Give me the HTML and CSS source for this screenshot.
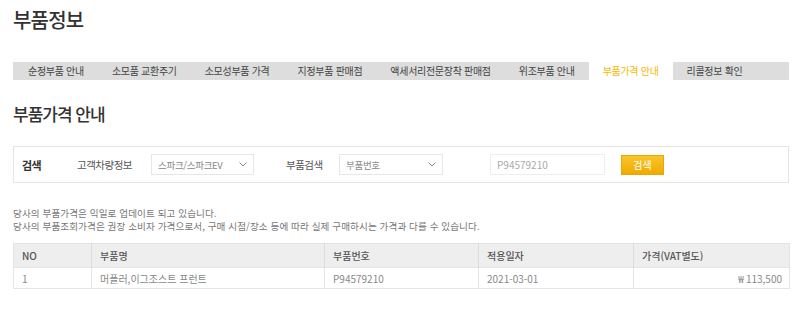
FILE: index.html
```html
<!DOCTYPE html>
<html lang="ko">
<head>
<meta charset="utf-8">
<link rel="stylesheet" href="styles.css">
</head>
<body>
<div class="page">
  <h1 class="title">부품정보</h1>
  <nav class="tabs">
    <a class="tab">순정부품 안내</a>
    <a class="tab">소모품 교환주기</a>
    <a class="tab">소모성부품 가격</a>
    <a class="tab">지정부품 판매점</a>
    <a class="tab">액세서리전문장착 판매점</a>
    <a class="tab">위조부품 안내</a>
    <a class="tab active">부품가격 안내</a>
    <a class="tab">리콜정보 확인</a>
  </nav>
  <h2 class="heading">부품가격 안내</h2>
  <div class="search">
    <span class="search-title">검색</span>
    <span class="label label-car">고객차량정보</span>
    <div class="select select-car">
      <span>스파크/스파크EV</span>
      <svg class="chev" width="8" height="5" viewBox="0 0 8 5"><path d="M0.5 0.5 L4 4 L7.5 0.5" fill="none" stroke="#888" stroke-width="1"/></svg>
    </div>
    <span class="label label-part">부품검색</span>
    <div class="select select-part">
      <span>부품번호</span>
      <svg class="chev" width="8" height="5" viewBox="0 0 8 5"><path d="M0.5 0.5 L4 4 L7.5 0.5" fill="none" stroke="#888" stroke-width="1"/></svg>
    </div>
    <div class="input">P94579210</div>
    <button class="btn">검색</button>
  </div>
  <div class="notice">
    <p class="notice-line">당사의 부품가격은 익일로 업데이트 되고 있습니다.</p>
    <p class="notice-line">당사의 부품조회가격은 권장 소비자 가격으로서, 구매 시점/장소 등에 따라 실제 구매하시는 가격과 다를 수 있습니다.</p>
  </div>
  <table class="grid">
    <colgroup>
      <col class="c-no"><col class="c-name"><col class="c-code"><col class="c-date"><col class="c-price">
    </colgroup>
    <thead>
      <tr><th>NO</th><th>부품명</th><th>부품번호</th><th>적용일자</th><th>가격(VAT별도)</th></tr>
    </thead>
    <tbody>
      <tr><td>1</td><td>머플러,이그조스트 프런트</td><td>P94579210</td><td>2021-03-01</td><td class="price">₩&nbsp;113,500</td></tr>
    </tbody>
  </table>
</div>
</body>
</html>
```
FILE: styles.css
```css
* { box-sizing: border-box; }
html, body { margin: 0; padding: 0; background: #fff; }
body {
  font-family: "Noto Sans CJK KR", "Noto Sans", "Liberation Sans", sans-serif;
  color: #333;
}
.page {
  width: 776px;
  margin-left: 13px;
  padding-top: 6px;
}
.title {
  margin: 0;
  font-size: 20px;
  font-weight: 500;
  line-height: 28px;
  letter-spacing: -0.8px;
  color: #333;
}
.tabs {
  display: flex;
  margin-top: 28px;
  height: 18px;
  background: #dddddd;
  padding-left: 1px;
}
.tab {
  display: block;
  padding: 0 14px;
  font-size: 10px;
  line-height: 18px;
  letter-spacing: -0.3px;
  color: #444;
  white-space: nowrap;
}
.tab.active {
  background: #fff;
  color: #f7b800;
}
.heading {
  margin: 22px 0 0;
  font-size: 17px;
  font-weight: 500;
  line-height: 24px;
  letter-spacing: -1px;
  color: #333;
}
.search {
  display: flex;
  align-items: center;
  margin-top: 20px;
  height: 37px;
  border: 1px solid #e4e4e4;
  padding-left: 8px;
}
.search-title {
  font-size: 11px;
  font-weight: 700;
  color: #333;
  width: 55px;
  letter-spacing: -0.5px;
}
.label {
  font-size: 10.5px;
  color: #555;
  letter-spacing: -0.5px;
}
.label-car { width: 74px; }
.label-part { width: 53px; margin-left: 32px; }
.select {
  display: flex;
  align-items: center;
  justify-content: space-between;
  height: 21px;
  width: 103px;
  border: 1px solid #e6e6e6;
  padding: 0 6px 0 6px;
  font-size: 9.5px;
  color: #888;
  letter-spacing: -0.3px;
}
.select-car { width: 103px; }
.select-part { width: 104px; }
.chev { display: block; }
.input {
  margin-left: 47px;
  width: 115px;
  height: 21px;
  border: 1px solid #eeeeee;
  padding: 0 6px;
  font-size: 10px;
  line-height: 19px;
  color: #aaa;
}
.btn {
  margin-left: 16px;
  width: 43px;
  height: 20px;
  border: 1px solid #e9a800;
  background: linear-gradient(#f8c52a, #f0aa00);
  color: #fff;
  font-family: inherit;
  font-size: 10px;
  padding: 0;
  line-height: 18px;
}
.notice {
  margin-top: 24px;
  display: flex;
  flex-direction: column;
}
.notice-line {
  margin: 0;
  font-size: 9.6px;
  line-height: 13px;
  color: #777;
  letter-spacing: 0.08px;
  white-space: nowrap;
}
.grid {
  margin-top: 10px;
  width: 776px;
  border-collapse: collapse;
  table-layout: fixed;
  font-size: 10px;
  border: 1px solid #e4e4e4;
}
.c-no { width: 78px; }
.c-name { width: 233px; }
.c-code { width: 154px; }
.c-date { width: 155px; }
.c-price { width: 156px; }
.grid th {
  height: 24px;
  background: #eeeeee;
  text-align: left;
  font-weight: 500;
  color: #555;
  padding: 0 8px;
  border-left: 1px solid #dcdcdc;
}
.grid td {
  height: 21px;
  padding: 0 8px;
  color: #888;
  border-left: 1px solid #e4e4e4;
  border-top: 1px solid #e4e4e4;
}
.grid th:first-child, .grid td:first-child { border-left: 0; }
.grid td.price { text-align: right; padding-right: 7px; }
```
